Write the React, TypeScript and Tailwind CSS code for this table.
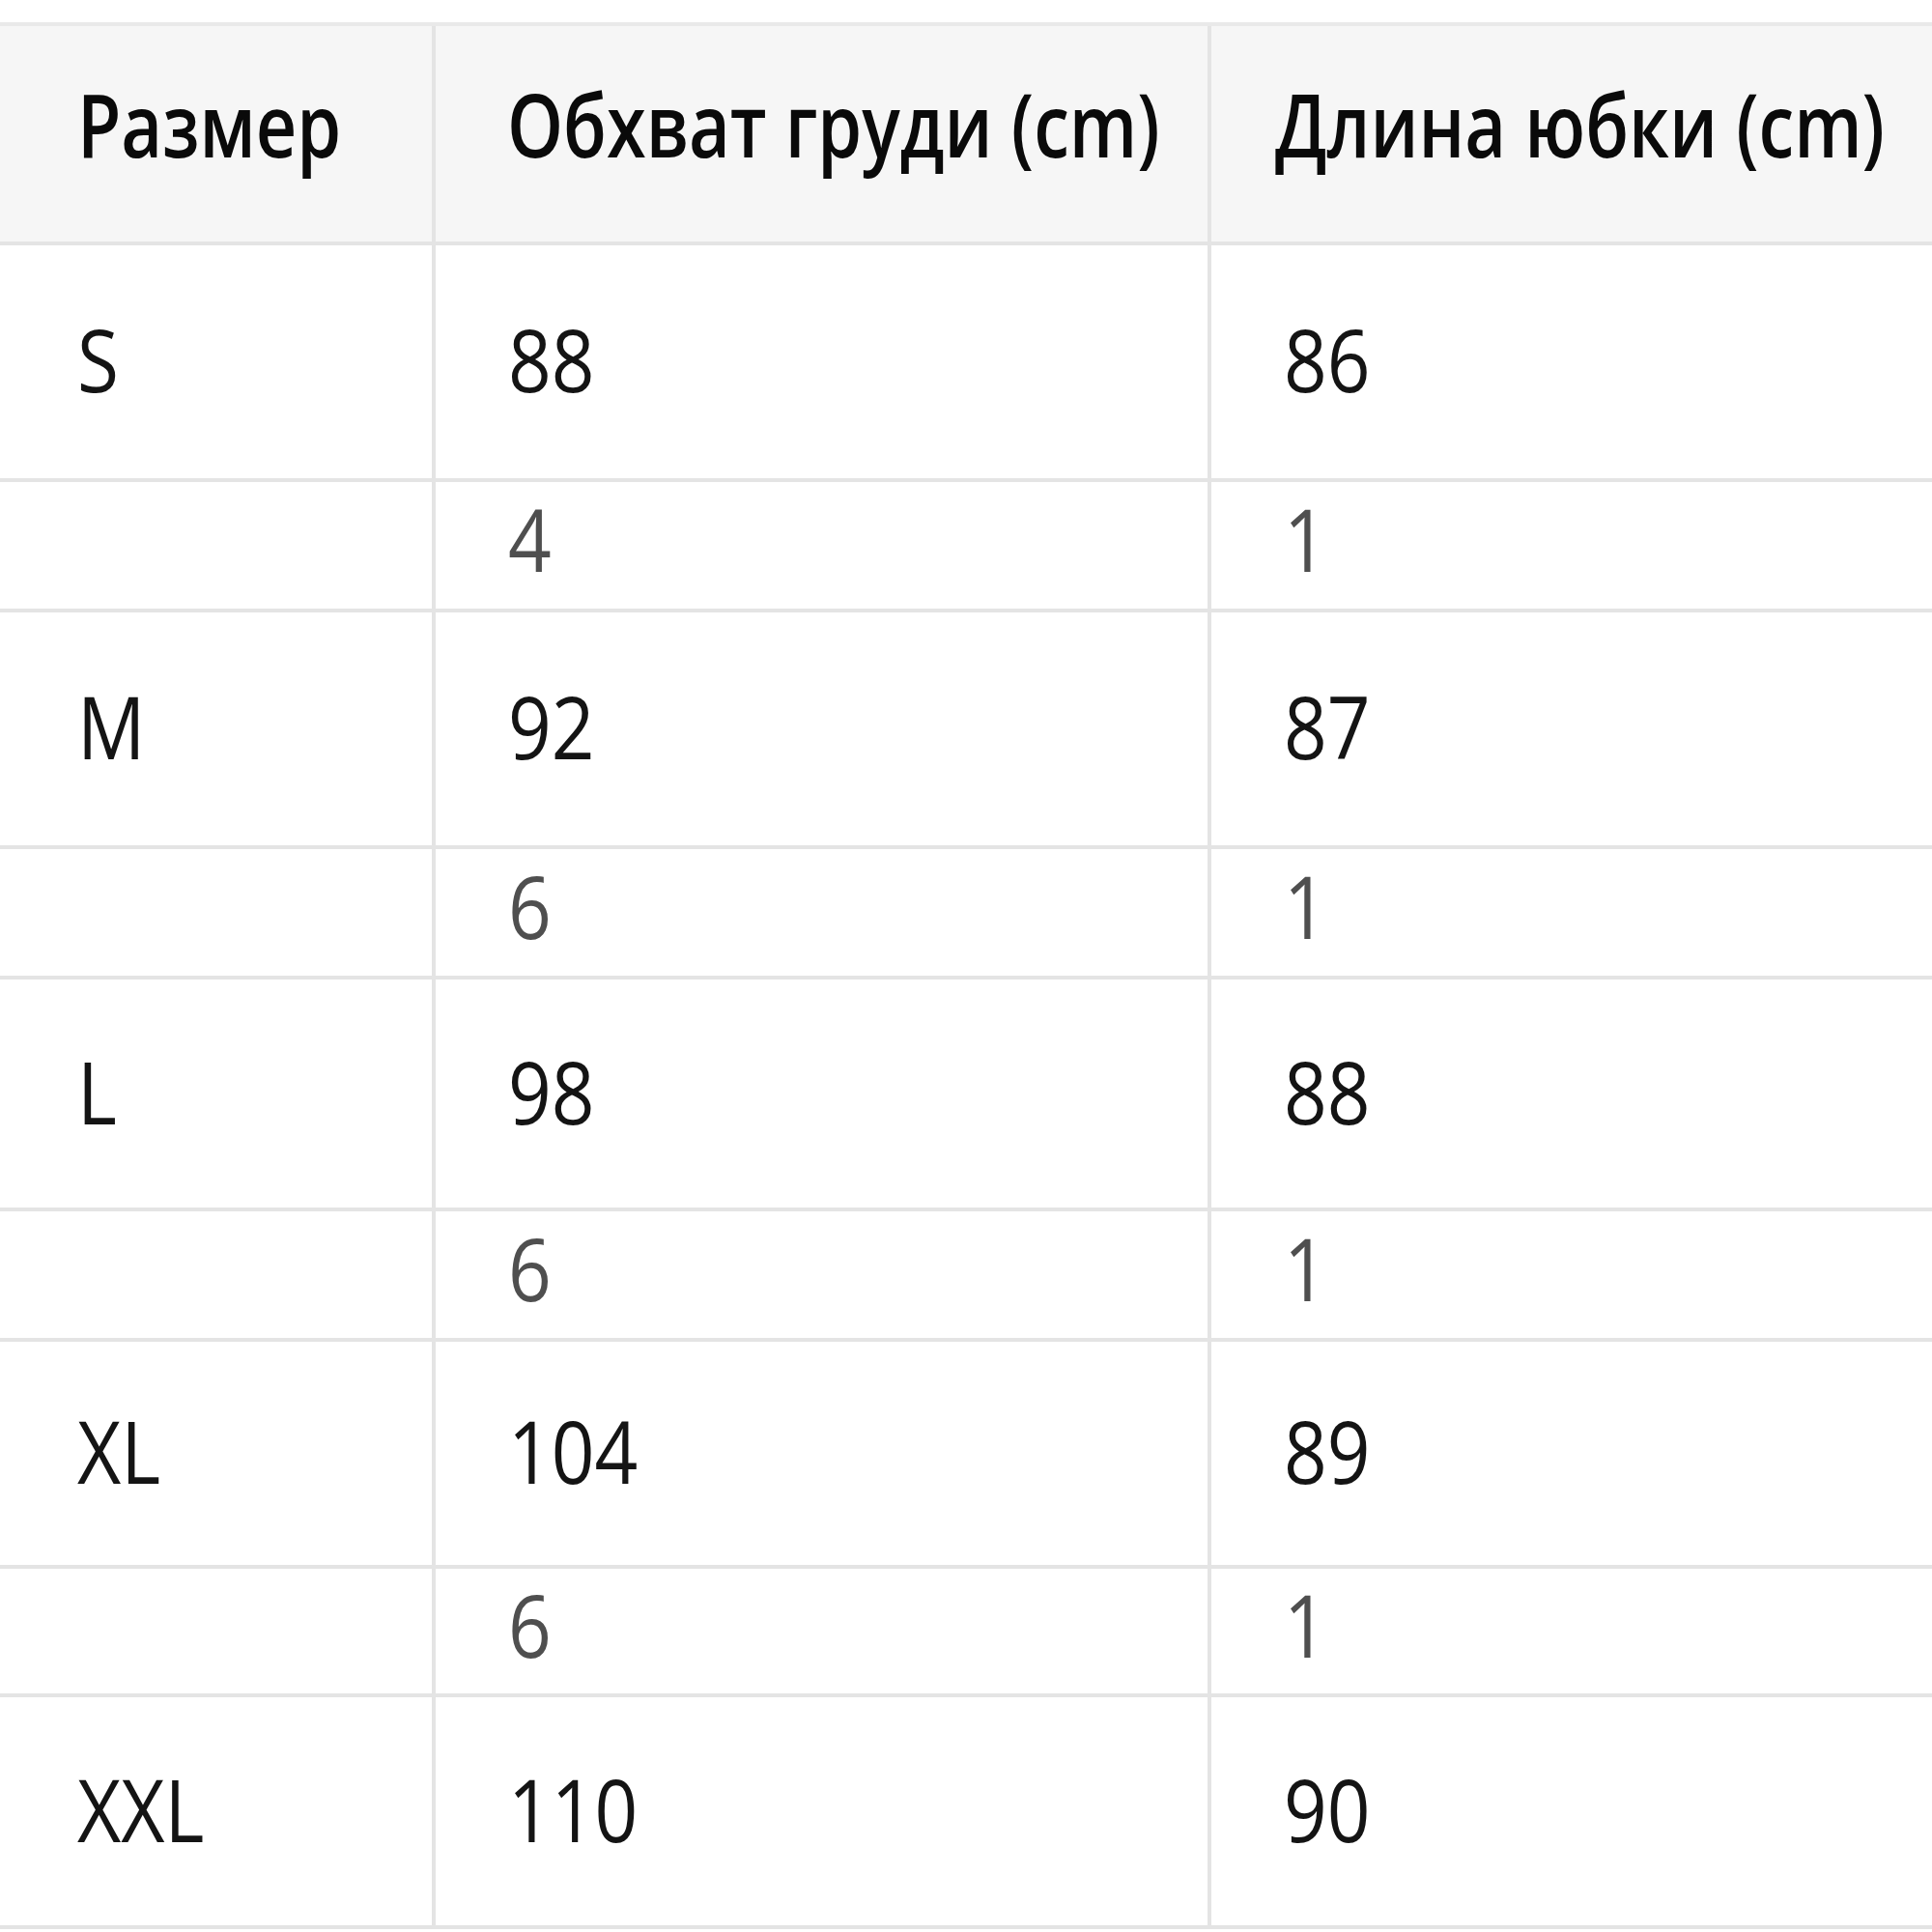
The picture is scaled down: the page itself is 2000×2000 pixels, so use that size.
const rows: { size: string; chest: string; skirt: string; h: string }[] = [
  { size: "S", chest: "88", skirt: "86", h: "h-[245px]" },
  { size: "", chest: "4", skirt: "1", h: "h-[135px]" },
  { size: "M", chest: "92", skirt: "87", h: "h-[245px]" },
  { size: "", chest: "6", skirt: "1", h: "h-[135px]" },
  { size: "L", chest: "98", skirt: "88", h: "h-[240px]" },
  { size: "", chest: "6", skirt: "1", h: "h-[135px]" },
  { size: "XL", chest: "104", skirt: "89", h: "h-[235px]" },
  { size: "", chest: "6", skirt: "1", h: "h-[133px]" },
  { size: "XXL", chest: "110", skirt: "90", h: "h-[240px]" },
];

const headers = [
  { text: "Размер", pad: "pl-[80px]" },
  { text: "Обхват груди (cm)", pad: "pl-[74px]" },
  { text: "Длина юбки (cm)", pad: "pl-[66px]" },
];

function Cell({ text, sub, col }: { text: string; sub: boolean; col: number }) {
  return (
    <div
      className={
        "flex items-center " +
        (col === 0 ? "pl-[80px] " : "pl-[75px] ") +
        (col < 2 ? "border-r-4 border-[#e4e4e4] " : "") +
        (sub ? "pb-[16px] text-[#4f4f4f]" : "pb-[7px] text-[#141414]")
      }
    >
      <span className="origin-left scale-x-[0.87] whitespace-nowrap text-[90px] leading-none">{text}</span>
    </div>
  );
}

export default function App() {
  return (
    <div
      className="h-[2000px] w-[2000px] overflow-hidden bg-white pt-[23px]"
      style={{ fontFamily: '"Open Sans", "Noto Sans", sans-serif' }}
    >
      <div className="border-t-4 border-[#e9e9e9]">
        <div className="grid h-[227px] grid-cols-[451px_803px_1fr] border-b-4 border-[#e4e4e4] bg-[#f6f6f6]">
          {headers.map((h, i) => (
            <div
              key={h.text}
              className={
                "flex items-center pb-[22px] text-[#0a0a0a] " +
                h.pad +
                (i < 2 ? " border-r-4 border-[#e4e4e4]" : "")
              }
            >
              <span className="origin-left scale-x-[0.82] whitespace-nowrap text-[90px] font-semibold leading-none">
                {h.text}
              </span>
            </div>
          ))}
        </div>
        {rows.map((r, i) => {
          const sub = r.size === "";
          return (
            <div
              key={i}
              className={"grid grid-cols-[451px_803px_1fr] border-b-4 border-[#e4e4e4] " + r.h}
            >
              <Cell text={r.size} sub={sub} col={0} />
              <Cell text={r.chest} sub={sub} col={1} />
              <Cell text={r.skirt} sub={sub} col={2} />
            </div>
          );
        })}
      </div>
    </div>
  );
}
